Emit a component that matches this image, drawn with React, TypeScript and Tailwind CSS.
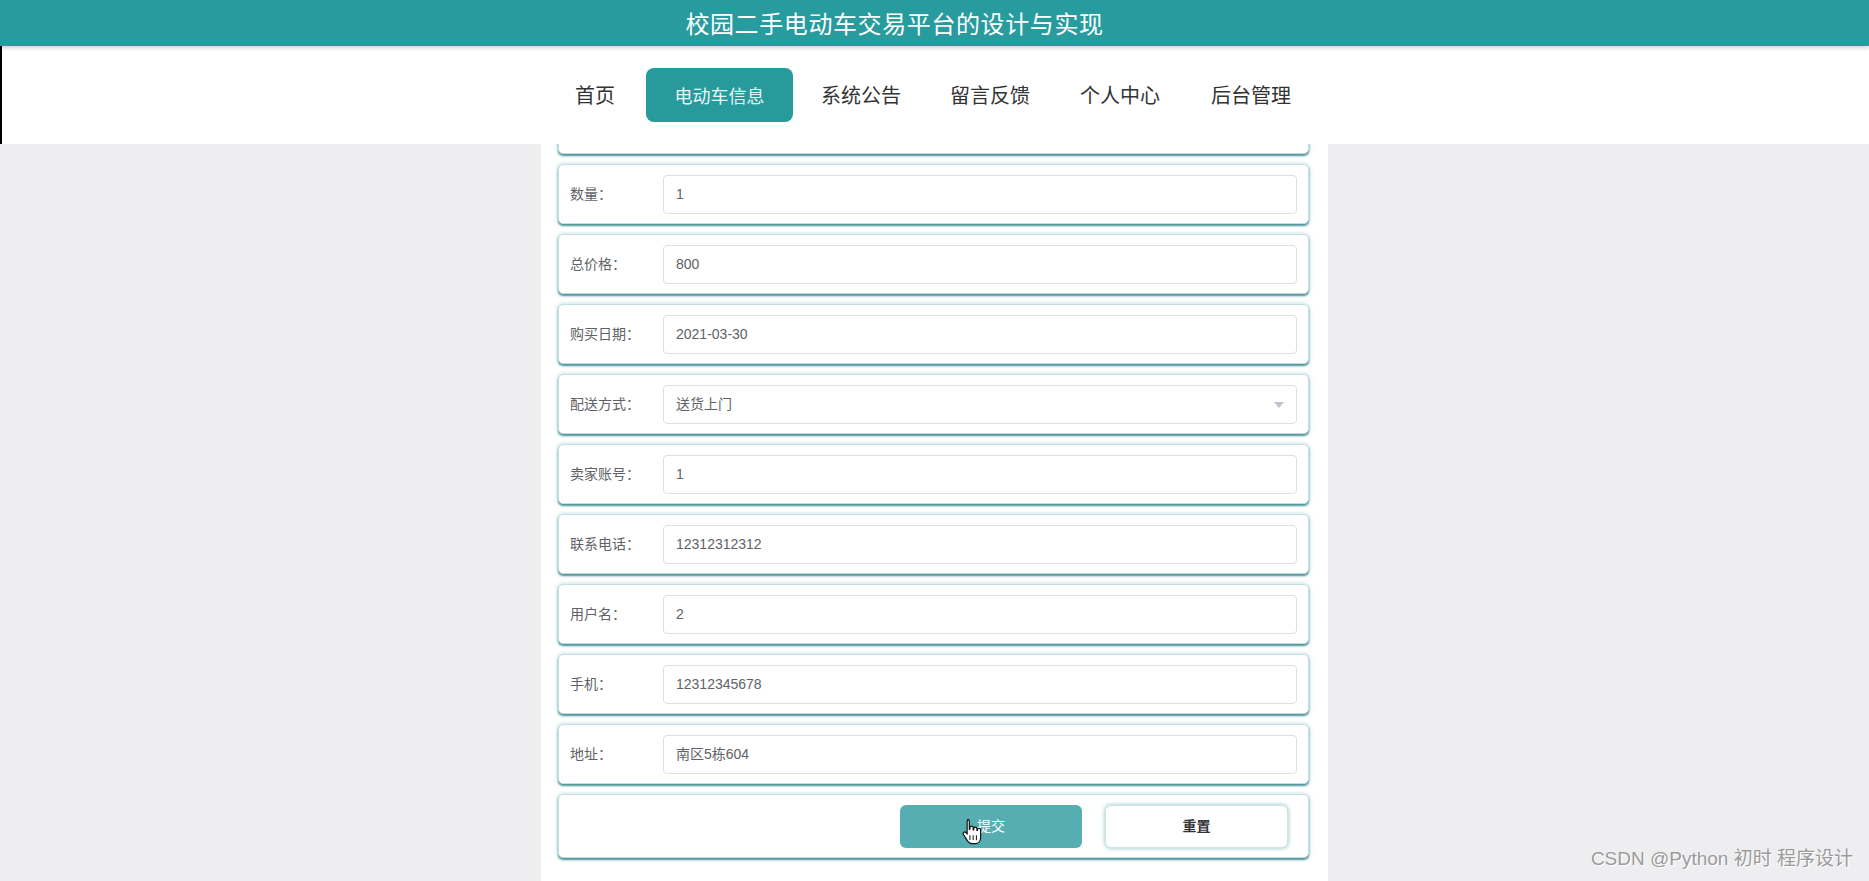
const navItems = ['首页', '电动车信息', '系统公告', '留言反馈', '个人中心', '后台管理'];

type Row = { label: string; value: string; select?: boolean };

const rows: Row[] = [
  { label: '数量：', value: '1' },
  { label: '总价格：', value: '800' },
  { label: '购买日期：', value: '2021-03-30' },
  { label: '配送方式：', value: '送货上门', select: true },
  { label: '卖家账号：', value: '1' },
  { label: '联系电话：', value: '12312312312' },
  { label: '用户名：', value: '2' },
  { label: '手机：', value: '12312345678' },
  { label: '地址：', value: '南区5栋604' },
];

const font = { fontFamily: '"Liberation Sans", "Noto Sans CJK SC", sans-serif' };

const cardShadow =
  'rounded-[5px] border border-[#c3e0e2] bg-white shadow-[0_2px_2px_rgba(30,118,124,0.75),0_0_4px_rgba(38,135,140,0.35)]';

function FormRow({ row, className = '' }: { row: Row; className?: string }) {
  return (
    <div className={`flex h-[60px] shrink-0 items-center px-[11px] ${cardShadow} ${className}`}>
      <label className="w-[93px] shrink-0 text-[14px] text-[#606266]">{row.label}</label>
      <div className="relative flex h-[39px] flex-1 items-center rounded-[4px] border border-[#dcdfe6] bg-white pl-[12px] text-[14px] text-[#606266]">
        {row.value}
        {row.select && (
          <span className="absolute right-[12px] top-[16px] h-0 w-0 border-x-[5px] border-t-[6px] border-x-transparent border-t-[#c0c4cc]" />
        )}
      </div>
    </div>
  );
}

function HandCursor() {
  return (
    <svg
      className="pointer-events-none absolute left-[62px] top-[13px]"
      width="20"
      height="28"
      viewBox="0 0 18 26"
    >
      <path
        d="M5 1.5c.8 0 1.5.7 1.5 1.5v7.5h.6V9c0-.8.7-1.5 1.5-1.5s1.5.7 1.5 1.5v2h.5V10c0-.8.7-1.5 1.5-1.5s1.5.7 1.5 1.5v1.5h.5v-.5c0-.8.7-1.5 1.5-1.5s1.4.7 1.4 1.5V18c0 3.2-2 5.8-5 5.8H8.8c-2 0-3.1-1-4-2.6L1.1 15.5c-.5-.8-.3-1.7.4-2.2.7-.5 1.6-.3 2.1.4l.9 1.3V3c0-.8.7-1.5 1.5-1.5z"
        fill="#fff"
        stroke="#111"
        strokeWidth="1.1"
        strokeLinejoin="round"
      />
      <path d="M7.1 16v4.5M10.1 16v4.5M13.1 16v4.5" stroke="#111" strokeWidth="0.9" />
    </svg>
  );
}

export default function App() {
  return (
    <div className="relative flex h-screen flex-col overflow-hidden bg-[#eeeef0]" style={font}>
      <header className="relative z-10 flex h-[46px] shrink-0 items-center justify-center bg-[#279b9e] pr-[80px] shadow-[0_2px_4px_rgba(0,0,0,0.18)]">
        <h1
          className="text-[24px] font-normal tracking-[0.6px] text-white"
          style={{ fontFamily: '"Noto Sans CJK SC", sans-serif' }}
        >
          校园二手电动车交易平台的设计与实现
        </h1>
      </header>

      <nav
        className="flex h-[98px] shrink-0 items-center justify-center border-l-2 border-black bg-white pr-[5px]"
        style={{ fontFamily: '"Noto Sans CJK SC", sans-serif' }}
      >
        <span className="text-[20px] text-[#333]">{navItems[0]}</span>
        <span className="ml-[31px] flex h-[54px] w-[147px] items-center justify-center rounded-[8px] bg-[#279a9b] text-[18px] text-[#e8f6f6]">
          {navItems[1]}
        </span>
        <span className="ml-[28px] text-[20px] text-[#333]">{navItems[2]}</span>
        <span className="ml-[49px] text-[20px] text-[#333]">{navItems[3]}</span>
        <span className="ml-[50px] text-[20px] text-[#333]">{navItems[4]}</span>
        <span className="ml-[51px] text-[20px] text-[#333]">{navItems[5]}</span>
      </nav>

      <main className="flex flex-1 justify-center">
        <div className="flex w-[787px] flex-col gap-[10px] overflow-hidden bg-white pl-[17px] pr-[19px]">
          <FormRow row={{ label: '', value: '' }} className="-mt-[50px]" />
          {rows.map((r) => (
            <FormRow key={r.label} row={r} />
          ))}
          <div className={`flex h-[64px] shrink-0 items-center justify-end gap-[23px] pr-[20px] ${cardShadow}`}>
            <button className="relative flex h-[43px] w-[182px] items-center justify-center rounded-[6px] bg-[#56aeb2] text-[14px] text-white">
              提交
              <HandCursor />
            </button>
            <button className="flex h-[43px] w-[183px] items-center justify-center rounded-[6px] border border-[#cfe4e5] bg-white text-[14px] font-bold text-[#333] shadow-[0_0_4px_rgba(38,135,140,0.55)]">
              重置
            </button>
          </div>
        </div>
      </main>

      <div className="pointer-events-none absolute bottom-[8px] right-[16px] text-[19px] text-[#9b9b9b] [text-shadow:1px_1px_0_#fff]">
        CSDN @Python 初时 程序设计
      </div>
    </div>
  );
}
